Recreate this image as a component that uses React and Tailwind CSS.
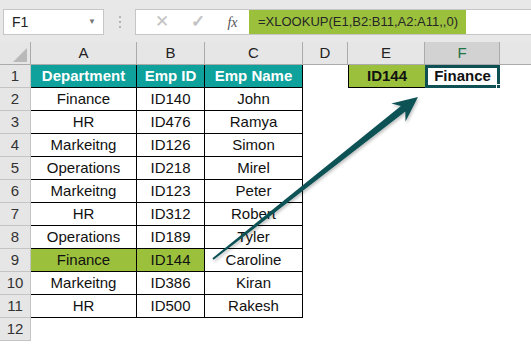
import React from 'react';

const rows = [
  ['Department', 'Emp ID', 'Emp Name'],
  ['Finance', 'ID140', 'John'],
  ['HR', 'ID476', 'Ramya'],
  ['Markeitng', 'ID126', 'Simon'],
  ['Operations', 'ID218', 'Mirel'],
  ['Markeitng', 'ID123', 'Peter'],
  ['HR', 'ID312', 'Robert'],
  ['Operations', 'ID189', 'Tyler'],
  ['Finance', 'ID144', 'Caroline'],
  ['Markeitng', 'ID386', 'Kiran'],
  ['HR', 'ID500', 'Rakesh'],
];

const cols = ['A', 'B', 'C', 'D', 'E', 'F'];

const font = { fontFamily: '"Liberation Sans", Arial, sans-serif' };

const FormulaBar = () => (
  <div className="flex items-center h-[42px] bg-[#e8e8e8] pt-[2px]">
    <div className="ml-[3px] w-[101px] h-[26px] bg-white border border-[#c6c6c6] flex items-center justify-between pl-[8px] pr-[7px]">
      <span className="text-[14px] text-[#222]">F1</span>
      <span className="text-[8px] text-[#777]">▼</span>
    </div>
    <div className="w-[31px] flex flex-col items-center gap-[3px]">
      <span className="w-[2px] h-[2px] bg-[#b5b5b5]" />
      <span className="w-[2px] h-[2px] bg-[#b5b5b5]" />
      <span className="w-[2px] h-[2px] bg-[#b5b5b5]" />
    </div>
    <div className="flex-1 h-[26px] bg-white border border-[#c6c6c6] border-r-0 flex items-center">
      <span className="w-[38px] text-center text-[17px] text-[#c3c3c3] pl-[14px]">✕</span>
      <span className="w-[38px] text-center text-[17px] font-bold text-[#c3c3c3] pl-[10px]">✓</span>
      <span className="w-[37px] text-center text-[14px] italic text-[#555] pl-[4px]" style={{ fontFamily: '"Liberation Serif", serif' }}>fx</span>
      <div className="w-[217px] h-full bg-[#9bc13c] flex items-center pl-[9px] text-[13px] text-[#262626]">
        =XLOOKUP(E1,B2:B11,A2:A11,,0)
      </div>
    </div>
  </div>
);

const cellClass = (r, c) => {
  // r: 1-based row, c: 0-based col index (0=A)
  const base = 'h-[23px] flex items-center justify-center text-[15px]';
  if (c <= 2 && r <= 11) {
    let bg = 'bg-white text-[#111]';
    if (r === 1) bg = 'bg-[#0fa19b] text-white font-bold';
    if (r === 9 && c <= 1) bg = 'bg-[#9bc13c] text-[#111]';
    return `${base} ${bg} border-r border-b border-black`;
  }
  if (r === 1 && c === 4) return `${base} bg-[#9bc13c] font-bold text-[#111] border-l border-b border-black`;
  if (r === 1 && c === 5) return `${base} bg-white font-bold text-[#111] border-[3px] border-[#0e5053] relative`;
  return `${base} bg-white`;
};

export default function App() {
  return (
    <div className="w-[531px] h-[344px] bg-white overflow-hidden relative" style={font}>
      <FormulaBar />
      <div className="grid grid-cols-[31px_106px_68px_98px_45px_77px_75px_1fr]">
        <div className="h-[23px] bg-[#e6e6e6] border-r border-b border-[#ababab] flex items-end justify-end pr-[3px] pb-[2px]">
          <div className="w-0 h-0 border-l-[14px] border-l-transparent border-b-[14px] border-b-[#b9b9b9]" />
        </div>
        {cols.map((c) => (
          <div
            key={c}
            className={`h-[23px] flex items-center justify-center text-[15px] border-r border-b border-[#ababab] ${
              c === 'F' ? 'bg-[#d2d2d2] text-[#217346]' : 'bg-[#e6e6e6] text-[#222]'
            }`}
          >
            {c}
          </div>
        ))}
        <div className="h-[23px] bg-[#e6e6e6] border-b border-[#ababab]" />

        {Array.from({ length: 12 }).map((_, i) => {
          const r = i + 1;
          const data = rows[i] || [];
          return (
            <React.Fragment key={r}>
              <div className="h-[23px] bg-[#e6e6e6] border-r border-b border-[#c4c4c4] flex items-center justify-center text-[15px] text-[#333]">
                {r}
              </div>
              {cols.map((c, ci) => (
                <div key={c} className={cellClass(r, ci)}>
                  {ci <= 2 ? data[ci] : r === 1 && ci === 4 ? 'ID144' : r === 1 && ci === 5 ? 'Finance' : ''}
                  {r === 1 && ci === 5 && (
                    <span className="absolute right-[-4px] bottom-[-4px] w-[5px] h-[5px] bg-[#0e5053] border border-white" />
                  )}
                </div>
              ))}
              <div className="h-[23px] bg-white" />
            </React.Fragment>
          );
        })}
      </div>

      <svg className="absolute left-0 top-0 pointer-events-none" width="531" height="344">
        <defs>
          <filter id="sh" x="-10%" y="-10%" width="120%" height="120%">
            <feDropShadow dx="1" dy="2" stdDeviation="1.5" floodColor="#000" floodOpacity="0.25" />
          </filter>
        </defs>
        <polygon
          points="212.4,258.2 400.9,106.1 391.3,103.5 418,97 405.5,121.5 405.3,111.5 213.6,259.8"
          fill="#0f5257"
          filter="url(#sh)"
        />
      </svg>
    </div>
  );
}
